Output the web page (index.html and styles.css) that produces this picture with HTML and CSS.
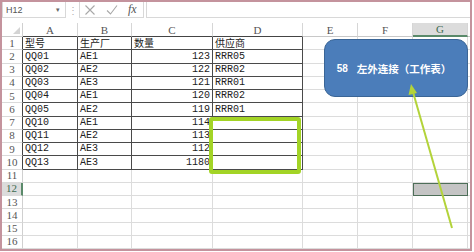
FILE: index.html
```html
<!DOCTYPE html>
<html>
<head>
<meta charset="utf-8">
<link rel="stylesheet" href="styles.css">
</head>
<body>
<div class="frame">
  <div class="fbar">
    <div class="namebox"><span class="nb-text">H12</span><span class="dd">▾</span></div>
    <div class="dots">⋮</div>
    <div class="btns">
      <svg class="ico" width="12" height="12" viewBox="0 0 12 12"><path d="M1.5 1.5 L10.5 10.5 M10.5 1.5 L1.5 10.5" stroke="#a8a8a8" stroke-width="1.1" fill="none"/></svg>
      <svg class="ico" width="12" height="12" viewBox="0 0 12 12"><path d="M1 6.5 L4.5 10 L11 1.5" stroke="#a8a8a8" stroke-width="1.1" fill="none"/></svg>
      <span class="fx">fx</span>
    </div>
    <div class="finput"></div>
  </div>
  <div class="sheet">
    <div class="corner"><span class="tri"></span></div>
    <div class="ch">A</div><div class="ch">B</div><div class="ch">C</div><div class="ch">D</div><div class="ch">E</div><div class="ch">F</div><div class="ch hsel">G</div><div class="ch"></div>

    <div class="rh tr">1</div><div class="c t cjk">型号</div><div class="c t cjk">生产厂</div><div class="c t cjk">数量</div><div class="c t cjk">供应商</div><div class="c"></div><div class="c"></div><div class="c"></div><div class="c"></div>
    <div class="rh tr">2</div><div class="c t">QQ01</div><div class="c t">AE1</div><div class="c t n">123</div><div class="c t">RRR05</div><div class="c"></div><div class="c"></div><div class="c"></div><div class="c"></div>
    <div class="rh tr">3</div><div class="c t">QQ02</div><div class="c t">AE2</div><div class="c t n">122</div><div class="c t">RRR02</div><div class="c"></div><div class="c"></div><div class="c"></div><div class="c"></div>
    <div class="rh tr">4</div><div class="c t">QQ03</div><div class="c t">AE3</div><div class="c t n">121</div><div class="c t">RRR01</div><div class="c"></div><div class="c"></div><div class="c"></div><div class="c"></div>
    <div class="rh tr">5</div><div class="c t">QQ04</div><div class="c t">AE1</div><div class="c t n">120</div><div class="c t">RRR02</div><div class="c"></div><div class="c"></div><div class="c"></div><div class="c"></div>
    <div class="rh tr">6</div><div class="c t">QQ05</div><div class="c t">AE2</div><div class="c t n">119</div><div class="c t">RRR01</div><div class="c"></div><div class="c"></div><div class="c"></div><div class="c"></div>
    <div class="rh tr">7</div><div class="c t">QQ10</div><div class="c t">AE1</div><div class="c t n">114</div><div class="c t"></div><div class="c"></div><div class="c"></div><div class="c"></div><div class="c"></div>
    <div class="rh tr">8</div><div class="c t">QQ11</div><div class="c t">AE2</div><div class="c t n">113</div><div class="c t"></div><div class="c"></div><div class="c"></div><div class="c"></div><div class="c"></div>
    <div class="rh tr">9</div><div class="c t">QQ12</div><div class="c t">AE3</div><div class="c t n">112</div><div class="c t"></div><div class="c"></div><div class="c"></div><div class="c"></div><div class="c"></div>
    <div class="rh tr">10</div><div class="c t">QQ13</div><div class="c t">AE3</div><div class="c t n">1180</div><div class="c t"></div><div class="c"></div><div class="c"></div><div class="c"></div><div class="c"></div>
    <div class="rh">11</div><div class="c"></div><div class="c"></div><div class="c"></div><div class="c"></div><div class="c"></div><div class="c"></div><div class="c"></div><div class="c"></div>
    <div class="rh rsel">12</div><div class="c"></div><div class="c"></div><div class="c"></div><div class="c"></div><div class="c"></div><div class="c"></div><div class="c sel"></div><div class="c"></div>
    <div class="rh">13</div><div class="c"></div><div class="c"></div><div class="c"></div><div class="c"></div><div class="c"></div><div class="c"></div><div class="c"></div><div class="c"></div>
    <div class="rh">14</div><div class="c"></div><div class="c"></div><div class="c"></div><div class="c"></div><div class="c"></div><div class="c"></div><div class="c"></div><div class="c"></div>
    <div class="rh">15</div><div class="c"></div><div class="c"></div><div class="c"></div><div class="c"></div><div class="c"></div><div class="c"></div><div class="c"></div><div class="c"></div>
    <div class="rh">16</div><div class="c"></div><div class="c"></div><div class="c"></div><div class="c"></div><div class="c"></div><div class="c"></div><div class="c"></div><div class="c"></div>
  </div>
</div>

<div class="hl"></div>
<div class="callout"><span class="num">58</span><span class="ctext">左外连接（工作表）</span></div>
<svg class="arrow" width="474" height="252" viewBox="0 0 474 252">
  <line x1="452" y1="228" x2="413" y2="92" stroke="#b3d33a" stroke-width="2"/>
  <path d="M411 84 L408.5 95 L417 93 Z" fill="#b3d33a"/>
</svg>
</body>
</html>
```
FILE: styles.css
```css
* { box-sizing: border-box; }
html, body { margin: 0; padding: 0; background: #fff; }
body { position: relative; width: 474px; height: 252px; overflow: hidden; }

.frame {
  width: 472px;
  height: 251px;
  border: 2px solid #c4939d;
  background: #fff;
  display: flex;
  flex-direction: column;
  overflow: hidden;
}

.fbar {
  display: flex;
  height: 16px;
  margin-bottom: 5px;
  align-items: stretch;
  font-family: "Liberation Sans", sans-serif;
}
.namebox {
  width: 64px;
  border: 1px solid #d8d8d8;
  border-top: none;
  display: flex;
  align-items: center;
  justify-content: space-between;
  padding: 0 5px 0 3px;
  font-size: 9px;
  color: #555;
}
.dd { font-size: 7px; color: #666; }
.dots { width: 13px; color: #b0b0b0; font-size: 10px; display: flex; align-items: center; justify-content: center; }
.btns {
  width: 65px;
  border: 1px solid #d8d8d8;
  border-top: none;
  display: flex;
  align-items: center;
  gap: 10px;
  padding-left: 4px;
}
.fx { font-family: "Liberation Serif", serif; font-style: italic; font-size: 12px; color: #555; }
.finput {
  flex: 1;
  margin-left: 2px;
  border-bottom: 1px solid #d8d8d8;
  border-left: 1px solid #d8d8d8;
}

.sheet {
  display: grid;
  grid-template-columns: 21px 55px 54px 81px 90px 55px 55px 55px 1fr;
  grid-template-rows: 14px repeat(16, 13.25px);
  font-family: "Liberation Mono", monospace;
  font-size: 10px;
  color: #222;
}
.corner {
  position: relative;
  border-right: 1px solid #d0d0d0;
  border-bottom: 1px solid #c8c8c8;
}
.tri {
  position: absolute; right: 2px; bottom: 2px;
  width: 0; height: 0;
  border-left: 7px solid transparent;
  border-bottom: 7px solid #d4d4d4;
}
.ch {
  font-family: "Liberation Serif", serif;
  font-size: 11px;
  color: #555;
  display: flex;
  align-items: center;
  justify-content: center;
  border-right: 1px solid #d6d6d6;
  border-bottom: 1px solid #c8c8c8;
}
.ch:nth-child(2), .ch:nth-child(3), .ch:nth-child(4), .ch:nth-child(5) { border-bottom-color: #444; }
.hsel { background: #dcdcdc; border-bottom: 2px solid #5a8a6a; color: #3d6b50; }

.rh {
  font-family: "Liberation Serif", serif;
  font-size: 11px;
  color: #555;
  display: flex;
  align-items: center;
  justify-content: center;
  border-right: 1px solid #d0d0d0;
  border-bottom: 1px solid #dadada;
  line-height: 1;
}
.rh.tr { border-right-color: #444; }
.rsel { background: #dcdcdc; border-right: 2px solid #5a8a6a; color: #3d6b50; }

.c {
  border-right: 1px solid #dcdcdc;
  border-bottom: 1px solid #dcdcdc;
  display: flex;
  align-items: flex-end;
  padding: 0 2px 1px 2px;
  line-height: 11px;
  white-space: nowrap;
}
.c.t { border-right-color: #4a4a4a; border-bottom-color: #4a4a4a; }
.c.n { justify-content: flex-end; }
.cjk { font-family: "Noto Sans CJK SC", sans-serif; font-size: 10px; }
.c.sel { background: #c4c4c4; border: 1px solid #4d6e58; }

.hl {
  position: absolute;
  left: 209px; top: 117px;
  width: 92px; height: 57px;
  border: 4px solid #a3d426;
  border-radius: 3px;
}

.callout {
  position: absolute;
  left: 324px; top: 39px;
  width: 144px; height: 58px;
  background: #4b7dba;
  border: 1.5px solid #3a6596;
  border-radius: 11px;
  display: flex;
  align-items: center;
  justify-content: center;
  gap: 9px;
  color: #fff;
  font-weight: bold;
  padding-right: 4px;
}
.num { font-family: "Liberation Sans", sans-serif; font-size: 10px; }
.ctext { font-family: "Noto Sans CJK SC", sans-serif; font-size: 10.5px; }

.arrow { position: absolute; left: 0; top: 0; pointer-events: none; }
```
